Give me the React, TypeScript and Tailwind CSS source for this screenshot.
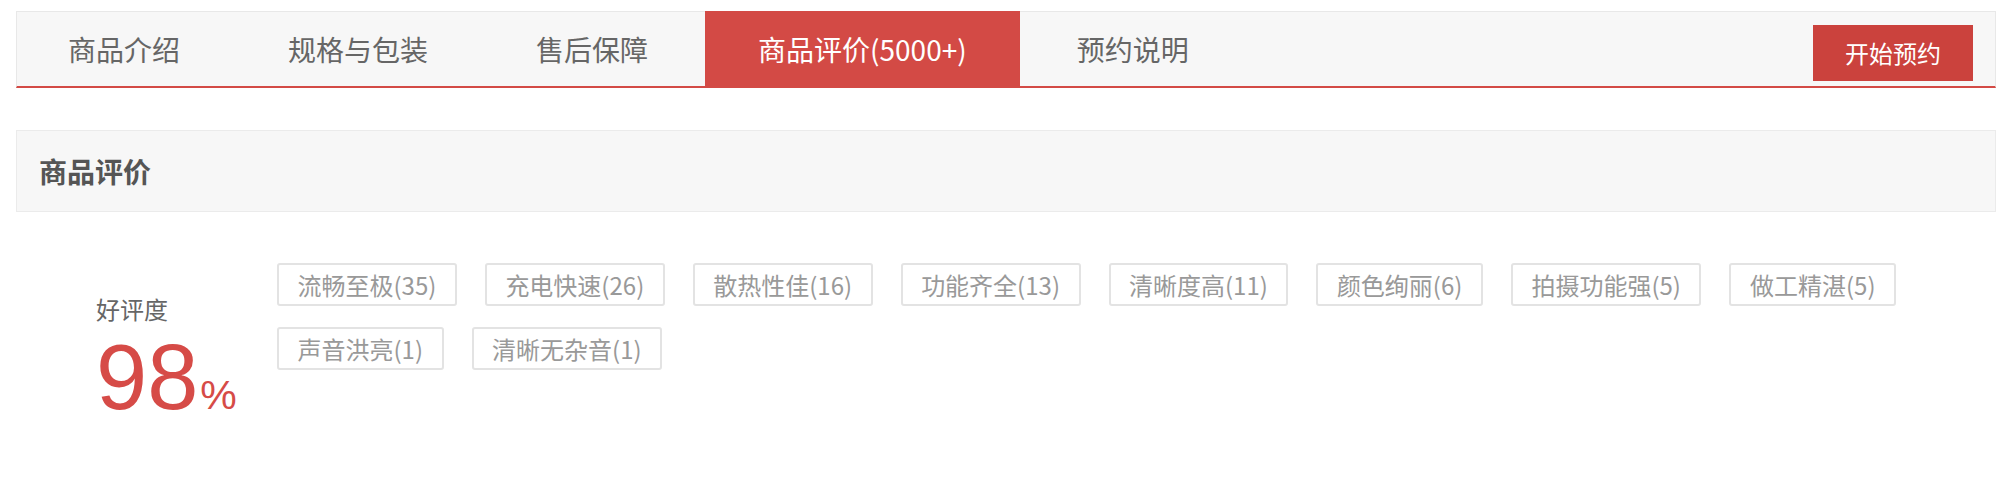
import React from 'react';

const tabs = ['商品介绍', '规格与包装', '售后保障', '商品评价(5000+)', '预约说明'];
const activeTab = 3;

const tags = [
  '流畅至极(35)',
  '充电快速(26)',
  '散热性佳(16)',
  '功能齐全(13)',
  '清晰度高(11)',
  '颜色绚丽(6)',
  '拍摄功能强(5)',
  '做工精湛(5)',
  '声音洪亮(1)',
  '清晰无杂音(1)',
];

export default function App() {
  return (
    <div className="h-[492px] w-full bg-white pt-[11px] font-['Noto_Sans_CJK_SC','Noto_Sans',sans-serif]">
      {/* Tab bar */}
      <div className="mx-4 flex h-[77px] border border-b-2 border-[#e8e8e8] border-b-[#d34a45] bg-[#f7f7f7]">
        <div className="flex gap-[6px]">
          {tabs.map((tab, i) => (
            <div
              key={tab}
              className={
                i === activeTab
                  ? '-mt-px flex items-center bg-[#d34a45] px-[53px] text-[28px] text-white'
                  : 'flex items-center px-[51px] text-[28px] text-[#666]'
              }
            >
              {tab}
            </div>
          ))}
        </div>
        <button className="ml-auto mr-[22px] mt-[13px] flex h-[56px] w-[160px] items-center justify-center bg-[#cb423d] text-[24px] text-white">
          开始预约
        </button>
      </div>

      {/* Section title */}
      <div className="mx-4 mt-[42px] flex h-[82px] items-center border border-[#ebebeb] bg-[#f7f7f7] pl-[22px] text-[28px] font-bold text-[#555]">
        商品评价
      </div>

      {/* Rating */}
      <div className="mx-4 mt-[51px] flex">
        <div className="w-[261px] shrink-0 pl-[80px] pt-[32px]">
          <div className="text-[24px] leading-[28px] text-[#666]">好评度</div>
          <div className="mt-[8px] flex items-baseline font-['Liberation_Sans',Arial,sans-serif] text-[#d64b47]">
            <span className="text-[92px] leading-[92px]">98</span>
            <span className="ml-[2px] text-[41px] leading-[92px]">%</span>
          </div>
        </div>
        <div className="flex flex-wrap content-start gap-x-[28px] gap-y-[21px]">
          {tags.map((tag) => (
            <span
              key={tag}
              className="flex h-[43px] items-center rounded-[3px] border-2 border-[#e3e3e3] px-[18.5px] text-[24px] text-[#999]"
            >
              {tag}
            </span>
          ))}
        </div>
      </div>
    </div>
  );
}
